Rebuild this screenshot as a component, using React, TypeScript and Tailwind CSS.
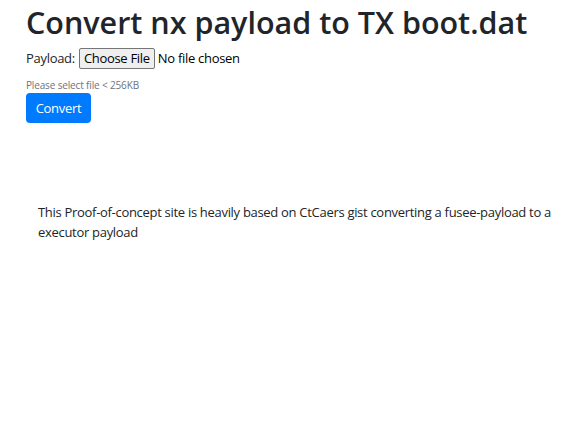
export default function App() {
  return (
    <div className="min-h-[435px] bg-white pl-[26px] pr-[10px] pt-[4px] text-[13px] leading-[19px] tracking-[-0.3px] text-[#212529] [font-family:'Open_Sans',sans-serif]">
      <h1 className="whitespace-nowrap text-[30.5px] font-semibold leading-[37px] tracking-normal text-[#212529]">Convert nx payload to TX boot.dat</h1>
      <div className="mt-[7px] flex h-[21px] items-center">
        <span>Payload:</span>
        <span className="ml-[4px] flex h-[21px] w-[76px] items-center justify-center rounded-[2px] border border-[#767676] bg-[#efefef] text-[#000]">
          Choose File
        </span>
        <span className="ml-[3px] text-[#000]">No file chosen</span>
      </div>
      <div className="mt-[10px] text-[10px] leading-[12px] tracking-[-0.15px] text-[#6c757d]">Please select file &lt; 256KB</div>
      <button className="mt-[2px] h-[30px] w-[65px] rounded-[4px] bg-[#007bff] text-[13px] text-white">Convert</button>
      <p className="mt-[80px] pl-[12px] text-[13px] leading-[19.5px] tracking-[-0.3px] text-[#212529]">
        This Proof-of-concept site is heavily based on CtCaers gist converting a fusee-payload to a executor payload
      </p>
    </div>
  )
}
